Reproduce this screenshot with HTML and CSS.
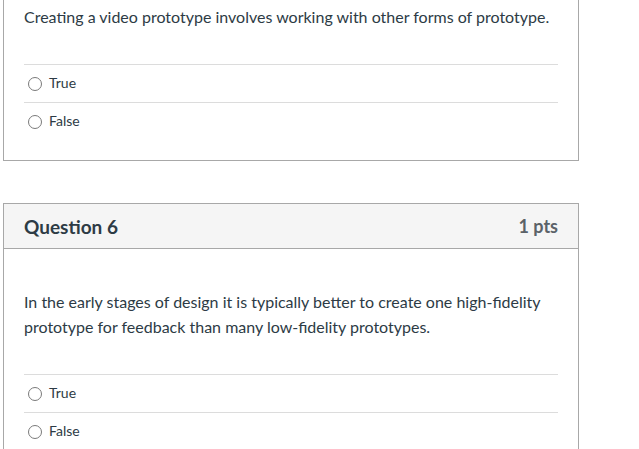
FILE: index.html
```html
<!DOCTYPE html>
<html>
<head>
<meta charset="utf-8">
<link rel="stylesheet" href="styles.css">
</head>
<body>
<div class="page">
  <div class="card card-cut">
    <div class="body body-cut">
      <div class="qtext">Creating a video prototype involves working with other forms of prototype.</div>
      <div class="answers">
        <div class="answer"><span class="radio"></span><span class="label">True</span></div>
        <div class="answer"><span class="radio"></span><span class="label">False</span></div>
      </div>
    </div>
  </div>
  <div class="card">
    <div class="header">
      <span class="qname">Question 6</span>
      <span class="pts">1 pts</span>
    </div>
    <div class="body">
      <div class="qtext">In the early stages of design it is typically better to create one high-fidelity prototype for feedback than many low-fidelity prototypes.</div>
      <div class="answers">
        <div class="answer"><span class="radio"></span><span class="label">True</span></div>
        <div class="answer"><span class="radio"></span><span class="label">False</span></div>
      </div>
    </div>
  </div>
</div>
</body>
</html>
```
FILE: styles.css
```css
html, body {
  margin: 0;
  padding: 0;
  background: #fff;
}
body {
  font-family: Lato, "Open Sans", sans-serif;
  color: #2d3b45;
}
.page {
  padding-left: 3px;
  display: flex;
  flex-direction: column;
  gap: 42px;
}
.card {
  width: 574px;
  border: 1px solid #a8a8a8;
  background: #fff;
}
.card-cut {
  border-top: none;
}
.header {
  height: 44px;
  background: #f5f5f5;
  border-bottom: 1px solid #a8a8a8;
  display: flex;
  align-items: center;
  justify-content: space-between;
  padding: 0 20px;
}
.qname {
  font-size: 19px;
  font-weight: 700;
  color: #2d3b45;
}
.pts {
  font-size: 18px;
  font-weight: 700;
  color: #5b6268;
}
.body {
  padding: 40px 20px 20px;
}
.body-cut {
  padding-top: 4px;
}
.qtext {
  font-size: 16px;
  line-height: 25px;
  margin-bottom: 35px;
}
.answer {
  height: 37px;
  border-top: 1px solid #dcdcdc;
  display: flex;
  align-items: center;
  padding-left: 4px;
  gap: 7px;
}
.radio {
  width: 12px;
  height: 12px;
  border: 1px solid #7a7a7a;
  border-radius: 50%;
  background: #fff;
  flex: none;
}
.label {
  font-size: 14px;
  line-height: 16px;
  margin-top: -2px;
}
```
